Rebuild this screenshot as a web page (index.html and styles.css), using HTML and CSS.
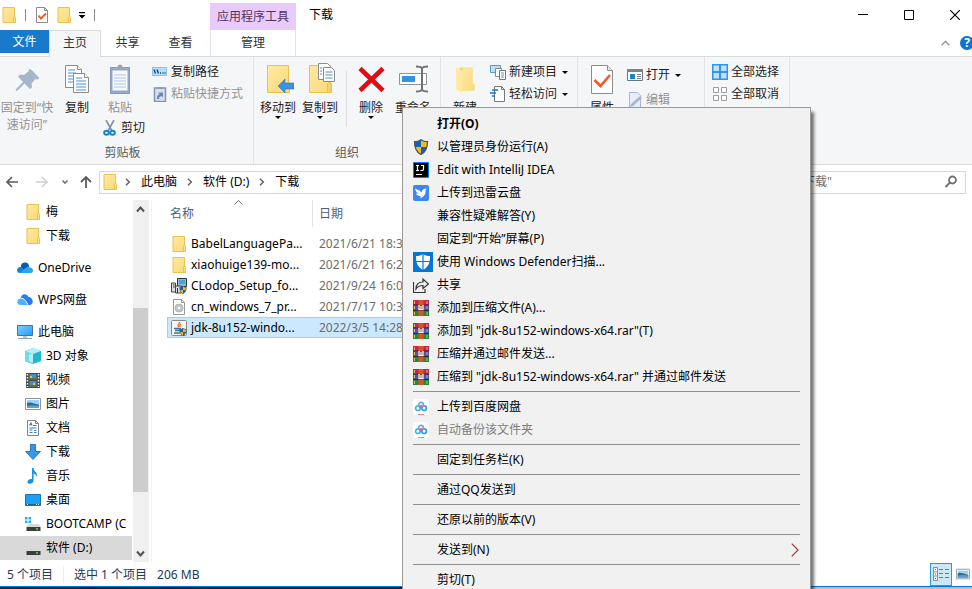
FILE: index.html
```html
<!DOCTYPE html>
<html lang="zh-CN">
<head>
<meta charset="utf-8">
<title>下载</title>
<link rel="stylesheet" href="styles.css">
</head>
<body>
<svg class="defs" aria-hidden="true">
  <linearGradient id="fold" x1="0" y1="0" x2="1" y2="1"><stop offset="0" stop-color="#ffe9a2"/><stop offset="1" stop-color="#fbd978"/></linearGradient>
  <linearGradient id="screen" x1="0" y1="0" x2="1" y2="1"><stop offset="0" stop-color="#7fd0ff"/><stop offset="1" stop-color="#1f9cf5"/></linearGradient>
  <symbol id="folder" viewBox="0 0 16 16"><path d="M2 .5h11.500v10l1 1v4H2z" fill="url(#fold)" stroke="#e8c252"/><path d="M12.500 15v-4.500l1-1.500 1 1.500V15" fill="#fce08a" stroke="#e8c252"/></symbol>
  <symbol id="shield" viewBox="0 0 16 16"><path d="M8 .7c2 1.500 4 2 6.500 2C14.500 9 13 13 8 15.500 3 13 1.500 9 1.500 2.700 4 2.700 6 2.200 8 .7z" fill="#0b63c0"/><path d="M8 .7c2 1.500 4 2 6.500 2 0 2 0 3.500-.6 5.300H8zM8 8v7.500C4.600 13.800 2.800 11.500 2.100 8z" fill="#fdb913"/><path d="M8 .7c2 1.500 4 2 6.500 2C14.500 9 13 13 8 15.500 3 13 1.500 9 1.500 2.700 4 2.700 6 2.200 8 .7z" fill="none" stroke="#4a5560" stroke-width="1.200"/></symbol>
  <symbol id="rar" viewBox="0 0 16 16"><path d="M0 0h16v5H0z" fill="#c62451"/><path d="M0 5h16v5.500H0z" fill="#4b52b8"/><path d="M0 10.500h16V16H0z" fill="#21893f"/><path d="M0 4.500h16v1H0zM0 10h16v1H0z" fill="#302838"/><path d="M1.500 1v3M1.500 6v3M1.500 12v3M14 1v3M14 6v3M14 12v3" stroke="#e0b850"/><path d="M5.500 0h5v16h-5z" fill="#d9541e"/><path d="M5 5h6v6H5z" fill="#8a4030"/><path d="M6 5v4.500h4V5M8 6v3.500" fill="none" stroke="#fff" stroke-width="1.200"/></symbol>
  <symbol id="pan" viewBox="0 0 16 16"><rect width="16" height="16" rx="3" fill="#fff"/><circle cx="4.900" cy="9.200" r="2.300" fill="none" stroke="#37b8f5" stroke-width="1.700"/><circle cx="11.100" cy="9.200" r="2.300" fill="none" stroke="#2f9cf4" stroke-width="1.700"/><circle cx="8" cy="5.700" r="2.300" fill="none" stroke="#6aa8ee" stroke-width="1.700"/><path d="m6.300 8.500 1.700-1.500 1.700 1.500" fill="none" stroke="#ee5b77" stroke-width="1.700"/><path d="M5 15.500h6" stroke="#ef7f91"/></symbol>
  <symbol id="drive" viewBox="0 0 16 16"><path d="M3 8h11l1.500 3H1.500z" fill="#d8d8d8"/><path d="M1.500 11h14v4h-14z" fill="#3c3c3c"/><path d="M11 13h2" stroke="#3cf04c" stroke-width="1.500"/></symbol>
  <symbol id="picture" viewBox="0 0 16 16"><path d="M.5 2.500h15v11H.5z" fill="#fff" stroke="#8e9499"/><path d="M2 4h12v8H2z" fill="#9bd4f7"/><path d="M2 7c3-1 5 0 12 2v3H2z" fill="#33698b"/><path d="M2 10c4-1 8-1 12 0v2H2z" fill="#5ba1d4"/></symbol>
  <symbol id="page" viewBox="0 0 32 32"><path d="M5.500 2.500h16l5 5v23h-21z" fill="#fff" stroke="#8c8c8c"/><path d="M21.500 2.500v5h5" fill="#e8e8e8" stroke="#8c8c8c"/></symbol>
  <symbol id="down" viewBox="0 0 6 3"><path d="M0 0h6L3 3z"/></symbol>
  <symbol id="chev" viewBox="0 0 6 8"><path d="M1 .8 4.300 4 1 7.200" fill="none" stroke="#626262" stroke-width="1.500"/></symbol>
</svg>
<div class="window">
  <header class="titlebar">
    <div class="quick">
      <svg class="i16"><use href="#folder"/></svg>
      <span class="tick-line"></span>
      <button class="plain" aria-label="属性"><svg class="i16" viewBox="0 0 16 16"><path d="M2.500.5h8l3 3v12h-11z" fill="#fff" stroke="#8c8c8c"/><path d="M10.500.5v3h3" fill="none" stroke="#8c8c8c"/><path d="m4.500 8.500 2.500 3 5-5" fill="none" stroke="#f15a24" stroke-width="1.900"/></svg></button>
      <button class="plain" aria-label="新建文件夹"><svg class="i16"><use href="#folder"/></svg></button>
      <button class="plain" aria-label="自定义快速访问工具栏"><svg class="custom" viewBox="0 0 8 7"><path d="M1 0h6v1.200H1zM.5 3h7L4 6.500z"/></svg></button>
      <span class="tick-line"></span>
    </div>
    <div class="context-label">应用程序工具</div>
    <h1>下载</h1>
    <div class="controls">
      <button class="plain" aria-label="最小化"><svg viewBox="0 0 10 10"><path d="M0 4.500h10" stroke="#000"/></svg></button>
      <button class="plain" aria-label="最大化"><svg viewBox="0 0 10 10"><path d="M.5.500h9v9h-9z" fill="none" stroke="#000"/></svg></button>
      <button class="plain" aria-label="关闭"><svg viewBox="0 0 10 10"><path d="m0 0 10 10M10 0 0 10" stroke="#000" stroke-width="1.200"/></svg></button>
    </div>
  </header>
  <nav class="tabs">
    <button class="file">文件</button>
    <button class="active">主页</button>
    <button>共享</button>
    <button>查看</button>
    <button class="manage">管理</button>
    <div class="tab-tools">
      <button class="plain" aria-label="最小化功能区"><svg class="collapse" viewBox="0 0 9 6"><path d="m.7 5.300 3.800-4 3.800 4" fill="none" stroke="#999" stroke-width="1.400"/></svg></button>
      <button class="plain help" aria-label="帮助">?</button>
    </div>
  </nav>
  <section class="ribbon">
    <div class="group clipboard">
      <div class="body">
        <button class="big off pin"><svg viewBox="0 0 32 32"><path d="M20 6.500 28.500 15l-2 1.500-2-.5-4 4.500.5 4-2 1.500-5.500-5.500L6 28l-1.500-1.500L12 19l-5-5.500 2-2 4 .5 5-4-.2-2z" fill="#a6b6cc"/></svg><span>固定到“快速访问”</span></button>
        <button class="big copy"><svg viewBox="0 0 32 32"><g fill="#fff" stroke="#8c8c8c"><path d="M4.500 2.500h12l4 4v18h-16z"/><path d="M16.500 2.500v4h4M12.500 10.500h11l4 4v15h-15z"/><path d="M23.500 10.500v4h4"/></g><path d="M7 7h7M7 10h8M7 13h5M7 16h5M7 19h5M15 15h6M15 18h10M15 21h10M15 24h10M15 27h10" stroke="#4a90e2" stroke-width="1.200"/></svg><span>复制</span></button>
        <div class="paste-stack">
          <button class="big off"><svg viewBox="0 0 32 32"><path d="M6.500 4.500h19v26h-19z" fill="#94a9cc" stroke="#879ab9"/><path d="M8.500 7.500h15v20h-15z" fill="#f5f9ff"/><path d="M10 12h12M10 15h12M10 18h12M10 21h12M10 24h12" stroke="#c9d8ee" stroke-width="1.500"/><path d="M10 7V4h3.500c0-3.500 5-3.500 5 0H22v3z" fill="#9ca5b5"/></svg><span>粘贴</span></button>
          <button class="small cut"><svg class="i16" viewBox="0 0 16 16"><path d="m4 0 6 11M12 0 6 11" stroke="#8091a5" stroke-width="1.600"/><ellipse cx="4.500" cy="12.800" rx="2.300" ry="2" fill="none" stroke="#1683cf" stroke-width="2"/><ellipse cx="10.500" cy="12.800" rx="2.300" ry="2" fill="none" stroke="#1683cf" stroke-width="2"/></svg>剪切</button>
        </div>
        <div class="smalls">
          <button class="small"><svg class="i16" viewBox="0 0 16 16"><path d="M.5 3.500h14v8H.5z" fill="#b4dffb" stroke="#8cc1e8"/><path d="m2 5.500 1.500 4M5 5.500l1.500 4M8 9h1M10.500 9h1M12.500 9h1" stroke="#1d3f66" stroke-width="1.300"/></svg>复制路径</button>
          <button class="small off"><svg class="i16" viewBox="0 0 16 16"><path d="M2.500 2h11v13.500h-11z" fill="#d4e0f0" stroke="#8295b8" stroke-width="1.500"/><path d="M5.500 1h5v2h-5z" fill="#8d9ab0"/><path d="M5 13c0-3.500 1-4.500 2.500-5L6 6.500h5v5L9.500 10C8 10.500 7 11 7 13z" fill="#6f86b5"/></svg>粘贴快捷方式</button>
        </div>
      </div>
      <div class="caption">剪贴板</div>
    </div>
    <div class="group organize">
      <div class="body">
        <button class="big"><svg viewBox="0 0 32 32"><path d="M5.500 2.500h21v17l1 2v8h-22z" fill="url(#fold)" stroke="#e8c252"/><path d="m16 23 7-7v4h9v6h-9v4z" fill="#3a93df" stroke="#2878bd" stroke-width=".6"/></svg><span>移动到</span><svg class="arrow"><use href="#down"/></svg></button>
        <button class="big"><svg viewBox="0 0 32 32"><path d="M5.500 2.500h21v17l1 2v8h-22z" fill="url(#fold)" stroke="#e8c252"/><path d="M23.500 29v-8l1.500-2 2 2v8" fill="#f7d36a" stroke="#e8c252"/><g fill="#fff" stroke="#8c8c8c"><path d="M14.500.5h9l3 3v13h-12z"/><path d="M19.500 4.500h8l3 3v11h-11z"/></g><path d="M16 5h2M16 8h2M16 11h2M21.500 9h7M21.500 12h7M21.500 15h7" stroke="#4a90e2"/></svg><span>复制到</span><svg class="arrow"><use href="#down"/></svg></button>
        <i class="divider"></i>
        <button class="big"><svg viewBox="0 0 32 32"><path d="m5 5.500 23 22M28 5.500l-23 22" stroke="#e00b14" stroke-width="4.500"/></svg><span>删除</span><svg class="arrow"><use href="#down"/></svg></button>
        <button class="big"><svg viewBox="0 0 32 32"><path d="M2.500 10.500h27v11h-27z" fill="#fff" stroke="#8e9499"/><path d="M5 13h13v6H5z" fill="#3394e6"/><path d="M19 3.500c3 0 5.500 0 6 2v21c-.5 2-3 2-6 2M31 3.500c-3 0-5.500 0-6 2v21c.5 2 3 2 6 2" fill="none" stroke="#6f7377" stroke-width="2"/></svg><span>重命名</span></button>
      </div>
      <div class="caption">组织</div>
    </div>
    <div class="group new">
      <div class="body">
        <button class="big"><svg viewBox="0 0 32 32"><path d="M10 4.500h13.500v17h2v6H12z" fill="#f8d77f"/><path d="m7 4 6 4v23l-6-5z" fill="#ffe9a7"/><path d="m13 9 2-4h8.500v16h2v6L13 28z" fill="url(#fold)"/></svg><span>新建</span></button>
        <div class="smalls">
          <button class="small"><svg class="i16" viewBox="0 0 16 16"><path d="M.5 1.500h10v7H.5z" fill="#b9e2fa" stroke="#5b9ac5"/><path d="M5.500 4.500h6v8h-6z" fill="#fff" stroke="#888"/><path d="M9.500 6.500h6v9h-6z" fill="#fff" stroke="#777"/><path d="M11 9h3M11 11h3M11 13h3" stroke="#5b9ac5"/></svg>新建项目<svg class="arrow"><use href="#down"/></svg></button>
          <button class="small"><svg class="i16" viewBox="0 0 16 16"><path d="M4.500.5h7l3 3v12h-10z" fill="#fff" stroke="#777"/><path d="M11.500.5v3h3" fill="none" stroke="#777"/><path d="M2 4h6M0 7h6M2 10h3" stroke="#1f76c2" stroke-width="1.400"/></svg>轻松访问<svg class="arrow"><use href="#down"/></svg></button>
        </div>
      </div>
      <div class="caption">新建</div>
    </div>
    <div class="group open">
      <div class="body">
        <button class="big"><svg viewBox="0 0 32 32"><use href="#page"/><path d="m8.500 17 6 6 9.500-11" fill="none" stroke="#f15a24" stroke-width="2.600"/></svg><span>属性</span></button>
        <div class="smalls loose">
          <button class="small"><svg class="i16" viewBox="0 0 16 16"><path d="M.5 2.500h15v11H.5z" fill="#fff" stroke="#6d7378"/><path d="M0 2h16v3H0z" fill="#7d8388"/><path d="M3 7h5v5H3z" fill="#1683d8"/><path d="M10 7.500h4M10 9.500h4M10 11.500h4" stroke="#7d8388"/></svg>打开<svg class="arrow"><use href="#down"/></svg></button>
          <button class="small off"><svg class="i16" viewBox="0 0 16 16"><path d="M2.500.5h8l3 3v12h-11z" fill="#e6eefb" stroke="#a6b7d5"/><path d="m4 12 9-8 2 2-9 8-3 1z" fill="#a6b7d5"/></svg>编辑</button>
        </div>
      </div>
      <div class="caption">打开</div>
    </div>
    <div class="group select">
      <div class="body">
        <div class="smalls">
          <button class="small"><svg class="i16" viewBox="0 0 16 16"><path d="M0 0h16v16H0z" fill="#3394e6"/><path d="M1.500 1.500h5.500v5.500H1.500zM9 1.500h5.500v5.500H9zM1.500 9h5.500v5.500H1.500zM9 9h5.500v5.500H9z" fill="#bde2ff"/></svg>全部选择</button>
          <button class="small"><svg class="i16" viewBox="0 0 16 16"><path d="M1.500 1.500h5v5h-5zM9.500 1.500h5v5h-5zM1.500 9.500h5v5h-5zM9.500 9.500h5v5h-5z" fill="#fff" stroke="#9d9d9d"/></svg>全部取消</button>
        </div>
      </div>
      <div class="caption">选择</div>
    </div>
  </section>
  <div class="address-row">
    <div class="history">
      <button class="plain" aria-label="后退"><svg viewBox="0 0 14 14"><path d="M13 7H2M7 2 2 7l5 5" fill="none" stroke="#5c5c5c" stroke-width="1.700"/></svg></button>
      <button class="plain" aria-label="前进"><svg viewBox="0 0 14 14"><path d="M1 7h11M7 2l5 5-5 5" fill="none" stroke="#d0d0d0" stroke-width="1.700"/></svg></button>
      <button class="plain recent" aria-label="最近浏览的位置"><svg viewBox="0 0 14 14"><path d="m4.500 5.500 2.500 2.500 2.500-2.500" fill="none" stroke="#737373" stroke-width="1.600"/></svg></button>
      <button class="plain" aria-label="上移"><svg viewBox="0 0 14 14"><path d="M7 13V2M2 7l5-5 5 5" fill="none" stroke="#5c5c5c" stroke-width="1.800"/></svg></button>
    </div>
    <div class="crumbs">
      <svg class="i16"><use href="#folder"/></svg>
      <svg class="chev"><use href="#chev"/></svg><a href="#">此电脑</a>
      <svg class="chev"><use href="#chev"/></svg><a href="#">软件 (D:)</a>
      <svg class="chev"><use href="#chev"/></svg><a href="#">下载</a>
    </div>
    <label class="search"><input type="text" aria-label="搜索" placeholder='搜索"下载"'><svg viewBox="0 0 14 14"><circle cx="8.500" cy="5" r="3.500" fill="none" stroke="#717171" stroke-width="1.800"/><path d="M6 7.500 1.500 12" stroke="#717171" stroke-width="2"/></svg></label>
  </div>
  <main class="content">
    <nav class="tree">
      <a class="sub" href="#"><svg class="i16"><use href="#folder"/></svg>梅</a>
      <a class="sub" href="#"><svg class="i16"><use href="#folder"/></svg>下载</a>
      <a class="root" href="#"><svg class="i16" viewBox="0 0 16 16"><path d="M4 7a4 4 0 0 1 8-1l1 6H4z" fill="#0a59b5"/><path d="M0 10.500A3.300 3.300 0 0 1 4 7l7 6H3a3 3 0 0 1-3-2.500z" fill="#1483dc"/><path d="M8 8.500c2-2 4-2 5-1 2 .3 3 1.500 3 3A2.500 2.500 0 0 1 13.500 13H3z" fill="#28a8ea"/></svg>OneDrive</a>
      <a class="root" href="#"><svg class="i16" viewBox="0 0 16 16"><path d="M4 6c0-4.500 6-5 7.500-1 4.500 0 6 7 1.500 8h-2z" fill="#277cf0"/><path d="M3 6.500c2-1 4 0 5 2l3 4.500H4C-.5 13-1 8 3 6.500z" fill="#4fb2ff"/><path d="M4 6.500c3-.5 4 1.500 7 6" fill="none" stroke="#fff"/></svg>WPS网盘</a>
      <a class="root" href="#"><svg class="i16" viewBox="0 0 16 16"><path d="M.5 1.500h15v10H.5z" fill="url(#screen)" stroke="#4b7390"/><path d="M6 12h4v2H6z" fill="#b6c6d2"/><path d="M1 14.500h14" stroke="#86a0b3"/></svg>此电脑</a>
      <a class="sub" href="#"><svg class="i16" viewBox="0 0 16 16"><path d="m8 0 8 3v10l-8 3-8-3V3z" fill="#22b6cd"/><path d="m0 3 8 3v10l-8-3z" fill="#6fdbe6"/><path d="m0 3 8-3 8 3-8 3z" fill="#b7f0f4"/><path d="m4 7 4-2v10l-4-2z" fill="#d1f5f7" opacity=".7"/></svg>3D 对象</a>
      <a class="sub" href="#"><svg class="i16" viewBox="0 0 16 16"><path d="M1 1h14v15H1z" fill="#494949"/><path d="M2.500 2v13M13.500 2v13" stroke="#fff" stroke-width="1.500" stroke-dasharray="1.500 1.500"/><path d="M4.500 2h7v6h-7zM4.500 9h7v6h-7z" fill="#4a87cf"/><path d="M5 6h6v2H5zM5 13h6v2H5z" fill="#4c7c25"/><path d="M5 4h2v2H5zM8 11h2v2H8z" fill="#f5bf30"/></svg>视频</a>
      <a class="sub" href="#"><svg class="i16"><use href="#picture"/></svg>图片</a>
      <a class="sub" href="#"><svg class="i16" viewBox="0 0 16 16"><path d="M2.500.5h8l3 3v12h-11z" fill="#fff" stroke="#858585"/><path d="M4.500 5.500 6 3l1 2.500M8 5.500h3.500M4.500 8h7M4.500 10h3M4.500 12.500h3M9 10.500h2.500M9 12.500h2.500" fill="none" stroke="#3f7faa" stroke-width="1.200"/><path d="M10.500.5v3h3" fill="none" stroke="#858585"/></svg>文档</a>
      <a class="sub" href="#"><svg class="i16" viewBox="0 0 16 16"><path d="M5.500.5h5v7h5L8 15.500.5 7.500h5z" fill="#3797e5" stroke="#287bc1"/></svg>下载</a>
      <a class="sub" href="#"><svg class="i16" viewBox="0 0 16 16"><path d="M7 0h1.500c0 4 4.500 4 3.500 9-1-2.500-2-3-3.500-3.500V13c0 3-6 4-6 1 0-2.500 2.500-3.500 4.500-3z" fill="#1592ef"/></svg>音乐</a>
      <a class="sub" href="#"><svg class="i16" viewBox="0 0 16 16"><path d="M.5 2.500h15v11H.5z" fill="#1d9ff7" stroke="#1475b5"/><path d="M1 12.500h14" stroke="#12638f"/><path d="M2 12.500h1M11 12.500h1M13 12.500h1" stroke="#fff"/></svg>桌面</a>
      <a class="sub" href="#"><svg class="i16" viewBox="0 0 16 16"><use href="#drive"/><path d="M0 1h2.500v2.500H0zM3.500 1H6v2.500H3.500zM0 4.500h2.500V7H0zM3.500 4.500H6V7H3.500z" fill="#18b7ef"/></svg>BOOTCAMP (C</a>
      <a class="sub current" href="#"><svg class="i16"><use href="#drive"/></svg>软件 (D:)</a>
    </nav>
    <div class="scroll">
      <svg viewBox="0 0 9 7"><path d="m1 5.500 3.500-4 3.500 4" fill="none" stroke="#505050" stroke-width="2"/></svg>
      <i class="track-before"></i><i class="thumb"></i><i class="track-after"></i>
      <svg viewBox="0 0 9 7"><path d="m1 1.500 3.500 4 3.500-4" fill="none" stroke="#505050" stroke-width="2"/></svg>
    </div>
    <div class="files">
      <table>
        <thead><tr><th class="name">名称<svg class="sort" viewBox="0 0 9 5"><path d="m.5 4.500 4-4 4 4" fill="none" stroke="#777"/></svg></th><th>日期</th></tr></thead>
        <tbody>
          <tr><td><div class="entry"><svg class="i16"><use href="#folder"/></svg><span>BabelLanguagePa...</span></div></td><td>2021/6/21 18:30</td></tr>
          <tr><td><div class="entry"><svg class="i16"><use href="#folder"/></svg><span>xiaohuige139-mo...</span></div></td><td>2021/6/21 16:20</td></tr>
          <tr><td><div class="entry"><svg class="i16" viewBox="0 0 16 16"><path d="M6.500.500h9v8h-9z" fill="#89b9dc" stroke="#333"/><path d="M8 2h6v4H8z" fill="#45a8d4"/><path d="M.5 5h4v9h-4zM4.500 8h6v7h-6z" fill="#ddd" stroke="#444"/><path d="M2 7h1.500M2 9h1.500M6.500 10v5" stroke="#333"/><svg x="8" y="8" width="8" height="8"><use href="#shield"/></svg></svg><span>CLodop_Setup_fo...</span></div></td><td>2021/9/24 16:00</td></tr>
          <tr><td><div class="entry"><svg class="i16" viewBox="0 0 16 16"><path d="M2.500.5h8l3 3v12h-11z" fill="#fff" stroke="#999"/><path d="M10.500.5v3h3" fill="none" stroke="#999"/><circle cx="8" cy="9" r="4" fill="#c2c6c9" stroke="#b0b5b9"/><circle cx="8" cy="9" r="1.200" fill="#fff"/></svg><span>cn_windows_7_pr...</span></div></td><td>2021/7/17 10:30</td></tr>
          <tr class="selected"><td><div class="entry"><svg class="i16" viewBox="0 0 16 16"><rect x=".5" y=".5" width="15" height="15" rx="1" fill="#f6f6f4" stroke="#888"/><path d="M8 2c2 1-3 3 0 5M10 4c-2 1-1 2-1 3" fill="none" stroke="#e76f21" stroke-width="1.300"/><path d="M3 8.500h7M4 10.500h5M3 13h6" stroke="#35749b" stroke-width="1.300"/><svg x="8" y="8" width="8" height="8"><use href="#shield"/></svg></svg><span>jdk-8u152-windo...</span></div></td><td>2022/3/5 14:28</td></tr>
        </tbody>
      </table>
    </div>
  </main>
  <footer class="status">
    <span class="count">5 个项目</span><span class="picked">选中 1 个项目</span><span>206 MB</span>
    <div class="views">
      <button class="plain details" aria-label="详细信息"><svg viewBox="0 0 16 14"><path d="M.5.5h4v13h-4zM.5 5h4M.5 9h4" fill="#fff" stroke="#8c8c8c"/><path d="M2 2.500h1" stroke="#388e3c"/><path d="M2 7h1" stroke="#1683d8"/><path d="M2 11.500h1" stroke="#d51919"/><path d="M6 2.500h4M12 2.500h4M6 6.500h4M12 6.500h4M6 10.500h4M12 10.500h4" stroke="#777"/></svg></button>
      <button class="plain" aria-label="大图标"><svg class="thumbs"><use href="#picture"/></svg></button>
    </div>
  </footer>
  <div class="edge"><i></i><i></i></div>
</div>
<div class="menu" role="menu">
  <button class="default">打开(O)</button>
  <button><svg class="i16"><use href="#shield"/></svg>以管理员身份运行(A)</button>
  <button><svg class="i16" viewBox="0 0 16 16"><path d="M.5.5h15v15H.5z" fill="#000" stroke="#087cfa"/><path d="M3 3.500h3M4.500 3.500v5M3 8.500h3M8 3.500h3M10.500 3v4c0 1.500-1.500 1.800-3 1.200" fill="none" stroke="#fff" stroke-width="1.200"/><path d="M3 12.500h6" stroke="#fff"/></svg>Edit with IntelliJ IDEA</button>
  <button><svg class="i16" viewBox="0 0 16 16"><rect width="16" height="16" rx="2" fill="#3c86f6"/><path d="M2 3.500c3 1.500 5 2 6.500 4 .5-3 2.500-4 5.500-4-1.500 1-1.500 2-1.500 3.500 0 3-2 5-5.500 6.500 1-1.500 1-2 0-2.500-2 0-3.500-1-4-2.500h2C3.500 7.500 2.500 5.500 2 3.500z" fill="#fff"/></svg>上传到迅雷云盘</button>
  <button>兼容性疑难解答(Y)</button>
  <button>固定到“开始”屏幕(P)</button>
  <button><svg class="defender" viewBox="0 0 20 20"><path d="M0 0h20v20H0z" fill="#0078d7"/><path d="M10 2c2 1.500 4 2 7 2 0 7-1.500 11-7 14-5.500-3-7-7-7-14 3 0 5-.5 7-2z" fill="#fff"/><path d="M10 2v16M3 9.500h14" stroke="#0078d7" stroke-width="1.200"/></svg>使用 Windows Defender扫描...</button>
  <button><svg class="i16" viewBox="0 0 16 16"><path d="M.5 5v10.500H12V12" fill="none" stroke="#333" stroke-width="1.200"/><path d="M3 12c0-5 3-7 7-7V2l5.500 5L10 11.500V8.500C7 8.500 5 9 3 12z" fill="none" stroke="#333" stroke-width="1.200"/></svg>共享</button>
  <button><svg class="i16"><use href="#rar"/></svg>添加到压缩文件(A)...</button>
  <button><svg class="i16"><use href="#rar"/></svg>添加到 "jdk-8u152-windows-x64.rar"(T)</button>
  <button><svg class="i16"><use href="#rar"/></svg>压缩并通过邮件发送...</button>
  <button><svg class="i16"><use href="#rar"/></svg>压缩到 "jdk-8u152-windows-x64.rar" 并通过邮件发送</button>
  <hr>
  <button><svg class="i16"><use href="#pan"/></svg>上传到百度网盘</button>
  <button disabled><svg class="i16"><use href="#pan"/></svg>自动备份该文件夹</button>
  <hr>
  <button>固定到任务栏(K)</button>
  <hr>
  <button>通过QQ发送到</button>
  <hr>
  <button>还原以前的版本(V)</button>
  <hr>
  <button>发送到(N)<svg class="more" viewBox="0 0 8 14"><path d="m.7.7 6.300 6.300-6.300 6.300" fill="none" stroke="#a33a32" stroke-width="1.200"/></svg></button>
  <hr>
  <button>剪切(T)</button>
</div>
</body>
</html>
```

FILE: styles.css
```css
* { box-sizing: border-box; }
html, body { height: 100%; }
body {
  margin: 0;
  overflow: hidden;
  position: relative;
  background: #fff;
  color: #000;
  font: 12px/16px "Noto Sans", "Noto Sans CJK SC", sans-serif;
}
button, input { font: inherit; color: inherit; }
button { border: 0; background: none; padding: 0; margin: 0; white-space: nowrap; }
a { color: inherit; text-decoration: none; }
svg { display: block; flex: none; }
.defs { position: absolute; width: 0; height: 0; }
.i16 { width: 16px; height: 16px; }
.plain { display: flex; align-items: center; justify-content: center; }

.window { height: 100%; display: flex; flex-direction: column; overflow: hidden; }

/* Title bar */
.titlebar { display: flex; flex: none; height: 30px; }
.quick { width: 210px; display: flex; align-items: center; gap: 6px; padding-left: 1px; }
.tick-line { width: 1px; height: 12px; background: #888; margin: 0 2px; }
.custom { width: 8px; height: 7px; }
.context-label {
  width: 86px; margin-top: 3px; background: #e9cbfb; color: #53325f;
  display: flex; align-items: center; justify-content: center;
}
h1 { margin: 0 0 0 13px; font-size: 12px; font-weight: 400; line-height: 29px; }
.controls { display: flex; margin: 0 -6px 0 auto; }
.controls button { width: 46px; height: 29px; }
.controls svg { width: 10px; height: 10px; }

/* Tabs */
.tabs { display: flex; flex: none; height: 27px; border-bottom: 1px solid #dadbdc; color: #333; }
.tabs > button { width: 53px; padding-bottom: 1px; }
.tabs > .file { width: 49px; height: 23px; padding: 0; background: #1979ca; color: #fff; }
.tabs > .active {
  width: 52px; height: 27px; padding-bottom: 2px;
  border: 1px solid #dadbdc; border-bottom: 0; background: #f5f6f7;
}
.tabs > .manage { width: 86px; margin-left: 3px; border: solid #e3e3e3; border-width: 0 1px; }
.tab-tools { display: flex; align-items: center; gap: 10px; margin: 0 -2px 0 auto; }
.collapse { width: 9px; height: 6px; }
.help { width: 14px; height: 14px; border-radius: 50%; background: #0c74d4; color: #fff; font-weight: 700; }

/* Ribbon */
.ribbon {
  flex: none; display: flex; height: 108px;
  background: #f5f6f7; border-bottom: 1px solid #dadbdc; color: #222;
}
.group { display: flex; flex-direction: column; padding: 6px 0 3px; border-right: 1px solid #e2e3e4; }
.clipboard { width: 254px; }
.organize { width: 187px; }
.new { width: 137px; }
.open { width: 127px; }
.select { width: 85px; }
.body { display: flex; flex: 1; }
.caption { text-align: center; color: #5a5a5a; }
.clipboard .caption { padding-right: 8px; }
.big { width: 42px; display: flex; flex-direction: column; align-items: center; align-self: flex-start; line-height: 17px; }
.big > svg:first-child { width: 32px; height: 32px; margin-bottom: 4px; }
.arrow { width: 6px; height: 3px; }
.off { color: #939393; }
.pin { width: 54px; white-space: normal; }
.copy { width: 46px; }
.paste-stack { width: 48px; padding-left: 4px; }
.paste-stack .big { width: 32px; }
.small { display: flex; align-items: center; gap: 3px; height: 16px; }
.cut { margin: 4px 0 0 -2px; }
.small .arrow { margin-left: 2px; }
.smalls { display: flex; flex-direction: column; gap: 6px; padding: 1px 0 0 4px; }
.loose { gap: 9px; padding-top: 4px; }
.organize .body, .new .body, .open .body, .select .body { padding-left: 3px; }
.divider { width: 1px; height: 56px; margin: 8px 3px 0 5px; background: #dcdddd; }

/* Address row */
.address-row { flex: none; display: flex; align-items: center; gap: 12px; height: 34px; padding-right: 6px; }
.history { display: flex; align-items: center; gap: 16px; width: 87px; padding-left: 5px; }
.history svg { width: 14px; height: 14px; }
.history .recent { margin: 0 -9px 0 -7px; }
.crumbs { flex: 1; display: flex; align-items: center; gap: 10px; height: 23px; padding-left: 2px; border: 1px solid #d9d9d9; }
.chev { width: 6px; height: 8px; }
.crumbs .i16 { margin-right: -3px; }
.search { width: 200px; height: 23px; display: flex; align-items: center; border: 1px solid #d9d9d9; padding: 0 7px; }
.search input { flex: 1; min-width: 0; border: 0; padding: 0; background: none; outline: 0; }
.search input::placeholder { color: #6d6d6d; opacity: 1; }
.search svg { width: 14px; height: 14px; }

/* Content */
.content { flex: 1; min-height: 0; display: flex; padding-top: 1px; }
.tree { width: 132px; overflow: hidden; }
.tree a { display: flex; align-items: center; height: 24px; gap: 5px; white-space: nowrap; }
.tree .sub { padding-left: 25px; }
.tree .root { padding-left: 17px; margin-top: 8px; }
.tree .current { background: #d9d9d9; }
.scroll { width: 16px; margin-left: 1px; padding-right: 1px; display: flex; flex-direction: column; align-items: center; background: #f0f0f0; }
.scroll svg { width: 9px; height: 7px; margin: 6px 0 5px; }
.track-before { flex: 90; }
.thumb { flex: 183; width: 15px; background: #cdcdcd; }
.track-after { flex: 52; }
.files { flex: 1; margin-left: 2px; padding-left: 15px; border-left: 1px solid #f3f3f3; }
table { width: 100%; max-width: 560px; border-collapse: separate; border-spacing: 0; table-layout: fixed; }
th { height: 27px; padding: 0 6px; text-align: left; font-weight: 400; color: #4c607a; }
th.name { width: 146px; padding-left: 3px; border-right: 1px solid #e3e3e3; position: relative; }
.sort { position: absolute; left: 67px; top: 0; width: 9px; height: 5px; }
thead::after { content: ""; display: block; height: 6px; }
td { height: 21px; padding: 0; border: solid transparent; border-width: 1px 0; }
td + td { padding-left: 6px; color: #6d6d6d; }
.entry { display: flex; gap: 4px; padding: 0 3px 0 4px; }
.entry span { white-space: nowrap; }
.selected td { background: #cce8ff; border-color: #99d1ff; }
.selected td:first-child { border-left: 1px solid #99d1ff; }
.selected .entry { padding-left: 3px; }

/* Status bar */
.status { flex: none; display: flex; align-items: center; height: 24px; padding-left: 7px; color: #1e395b; }
.status span { padding-top: 1px; }
.status .count { padding-right: 10px; margin-right: 10px; border-right: 1px solid #eee; }
.picked { margin-right: 10px; }
.views { display: flex; gap: 4px; margin-left: auto; padding-right: 2px; }
.details { width: 22px; height: 23px; border: 1px solid #2b9bd4; background: #cce8f6; }
.details svg { width: 16px; height: 14px; }
.thumbs { width: 14px; height: 14px; }
.edge { flex: none; display: flex; height: 3px; border-top: 1px solid #0078d7; background: #051a35; }
.edge i { flex: 1; }
.edge i + i { flex: 0 0 161px; background: #b9bec3; }

/* Context menu floating over the window */
.menu {
  position: absolute; left: 402px; top: 107px; width: 409px;
  padding: 4px 1px; border: 1px solid #999; background: #f1f1f1;
  box-shadow: 4px 4px 3px -1px rgba(0, 0, 0, .55);
}
.menu button { position: relative; display: flex; align-items: center; width: 100%; height: 23px; padding-left: 33px; text-align: left; }
.menu button > svg:first-child { position: absolute; left: 9px; }
.menu .defender { width: 20px; height: 20px; }
.menu .default { font-weight: 700; }
.menu button:disabled { color: #7d7d7d; }
.menu hr { height: 1px; margin: 3px 9px; border: 0; background: #919191; }
.menu button > .more:last-child { position: static; width: 8px; height: 14px; margin: 0 10px 0 auto; }
```
